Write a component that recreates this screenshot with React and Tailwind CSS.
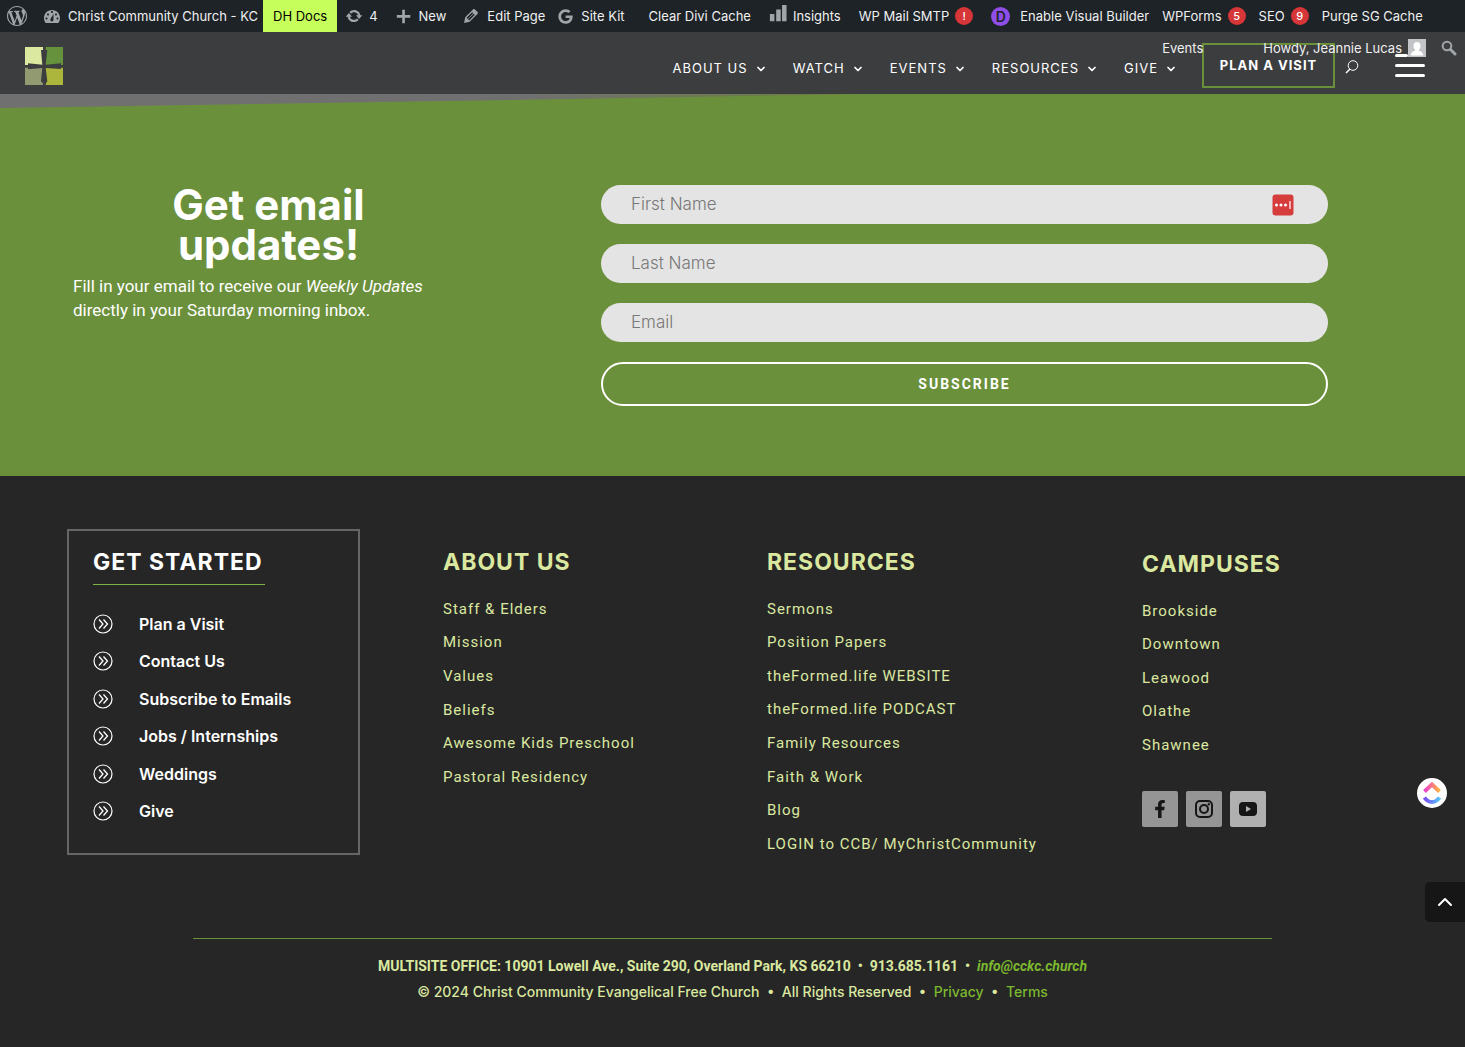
import React from 'react';
import { ChevronDown, ChevronUp } from 'lucide-react';
import { FaFacebookF, FaGoogle } from 'react-icons/fa';

const WP_ICONS = {
  wordpress:
    'M20 10c0-5.51-4.49-10-10-10C4.48 0 0 4.49 0 10c0 5.52 4.48 10 10 10 5.51 0 10-4.48 10-10zM7.78 15.37L4.37 6.22c.55-.02 1.17-.08 1.17-.08.5-.06.44-1.13-.06-1.11 0 0-1.45.11-2.37.11-.18 0-.37 0-.58-.01C4.12 2.69 6.87 1.11 10 1.11c2.33 0 4.45.87 6.05 2.34-.68-.11-1.65.39-1.65 1.58 0 .74.45 1.36.9 2.1.35.61.55 1.36.55 2.46 0 1.49-1.4 5-1.4 5l-3.03-8.37c.54-.02.82-.17.82-.17.5-.05.44-1.25-.06-1.22 0 0-1.44.12-2.38.12-.87 0-2.33-.12-2.33-.12-.5-.03-.56 1.2-.06 1.22l.92.08 1.26 3.41zM17.41 10c.24-.64.74-1.87.43-4.25.7 1.29 1.05 2.71 1.05 4.25 0 3.29-1.73 6.24-4.4 7.78.97-2.59 1.94-5.2 2.92-7.78zM6.1 18.09C3.12 16.65 1.11 13.53 1.11 10c0-1.3.23-2.48.72-3.59C3.25 10.3 4.67 14.2 6.1 18.09zm4.03-6.63l2.58 6.98c-.86.29-1.76.45-2.71.45-.79 0-1.57-.11-2.29-.33.81-2.38 1.62-4.74 2.42-7.1z',
  dashboard:
    'M3.76 17h12.48C17.34 15.63 18 13.9 18 12c0-4.41-3.58-8-8-8s-8 3.59-8 8c0 1.9.66 3.63 1.76 5zM9 6c0-.55.45-1 1-1s1 .45 1 1-.45 1-1 1-1-.45-1-1zM5 8.500c0-.55.45-1 1-1s1 .45 1 1-.45 1-1 1-1-.45-1-1zM13 8.500c0-.55.45-1 1-1s1 .45 1 1-.45 1-1 1-1-.45-1-1zM3.500 12.500c0-.55.45-1 1-1s1 .45 1 1-.45 1-1 1-1-.45-1-1zM14.500 12.500c0-.55.45-1 1-1s1 .45 1 1-.45 1-1 1-1-.45-1-1zM11.600 8l-.2 5.800c0 .9-.6 1.600-1.500 1.600s-1.600-.8-1.500-1.700c.2-1.200 3.200-5.700 3.200-5.700z',
  update:
    'M10.2 3.28c3.53 0 6.43 2.61 6.92 6h2.08l-3.5 4-3.5-4h2.32c-.45-1.97-2.21-3.45-4.32-3.45-1.45 0-2.73.71-3.54 1.78L4.95 5.66C6.23 4.2 8.11 3.28 10.2 3.28zm-.4 13.44c-3.52 0-6.43-2.61-6.92-6H.8l3.5-4c1.17 1.33 2.33 2.67 3.5 4H5.48c.45 1.97 2.21 3.45 4.32 3.45 1.45 0 2.73-.71 3.54-1.78l1.71 1.95c-1.28 1.46-3.15 2.38-5.25 2.38z',
  plus: 'M17 9v3h-6v6H8v-6H2V9h6V3h3v6z',
  edit: 'M13.89 3.39l2.71 2.72c.46.46.42 1.24.03 1.64l-8.01 8.02-5.56 1.16 1.16-5.58s7.6-7.63 7.99-8.03c.39-.39 1.22-.39 1.68.07zm-2.73 2.79l-5.59 5.61 1.11 1.11 5.54-5.65zm-2.97 8.23l5.58-5.6-1.07-1.08-5.59 5.6z',
  insights: 'M1 10h5v8H1zM8 5h5v13H8zM14.500 0h5v18h-5z',
};

function WpIcon({ name, className = 'size-5' }) {
  return (
    <svg viewBox="0 0 20 20" className={`${className} shrink-0 fill-[#a0a5aa]`} aria-hidden="true">
      <path fillRule="evenodd" d={WP_ICONS[name]} />
    </svg>
  );
}

function AdminItem({ icon, label, badge, className = '' }) {
  return (
    <li className={`h-8 shrink-0 ${className}`}>
      <a href="#" className="flex h-full items-center gap-[6px]">
        {icon}
        {label && <span className="pt-0.5">{label}</span>}
        {badge && (
          <span className="flex size-[18px] items-center justify-center rounded-full bg-[#d63638] text-[11px] font-medium text-white">
            {badge}
          </span>
        )}
      </a>
    </li>
  );
}

function AdminBar() {
  return (
    <div className="relative z-20 h-8 bg-[#1d2327] font-['Inter',sans-serif] text-[13px] text-[#f0f0f1]">
      <ul className="flex pl-[7px] whitespace-nowrap">
        <AdminItem icon={<WpIcon name="wordpress" />} />
        <AdminItem className="ml-[15px]" icon={<WpIcon name="dashboard" />} label="Christ Community Church - KC" />
        <AdminItem className="ml-[5px] bg-[#c6ff5c] px-[10px] text-black" label="DH Docs" />
        <AdminItem className="ml-2" icon={<WpIcon name="update" className="size-[18px]" />} label="4" />
        <AdminItem className="ml-[17px]" icon={<WpIcon name="plus" className="size-[18px]" />} label="New" />
        <AdminItem className="ml-[15px]" icon={<WpIcon name="edit" />} label="Edit Page" />
        <AdminItem className="ml-[13px]" icon={<FaGoogle className="mr-0.5 size-[15px] text-[#a0a5aa]" />} label="Site Kit" />
        <AdminItem className="ml-6" label="Clear Divi Cache" />
        <AdminItem className="ml-[18px]" icon={<WpIcon name="insights" className="mb-1 size-[18px]" />} label="Insights" />
        <AdminItem className="ml-[18px]" label="WP Mail SMTP" badge="!" />
        <AdminItem
          className="ml-[18px]"
          icon={
            <span className="mr-1 flex size-[19px] items-center justify-center rounded-full bg-[#8f4ee8] text-[14px] font-semibold text-[#1d2327]">
              D
            </span>
          }
          label="Enable Visual Builder"
        />
        <AdminItem className="ml-[13px]" label="WPForms" badge="5" />
        <AdminItem className="ml-[13px]" label="SEO" badge="9" />
        <AdminItem className="ml-[13px]" label="Purge SG Cache" />
      </ul>
      {/* items that wrap onto a second line, over the site header */}
      <ul className="absolute top-8 right-2 flex whitespace-nowrap">
        <AdminItem label="Events" />
        <li className="ml-[60px] h-8">
          <a href="#" className="flex h-full items-center gap-[6px]">
            <span className="pt-0.5">Howdy, Jeannie Lucas</span>
            <svg viewBox="0 0 18 18" className="size-[18px]" aria-hidden="true">
              <rect width="18" height="18" fill="#c3c4c7" />
              <path d="M9 3c2.200 0 3.500 1.600 3.500 3.900 0 1.700-.7 2.900-1.500 3.700v1.200c1.800.5 4 1.500 4.300 4.700H2.700c.3-3.200 2.500-4.200 4.300-4.700v-1.200c-.8-.8-1.500-2-1.500-3.700C5.500 4.600 6.800 3 9 3z" fill="#fff" />
            </svg>
          </a>
        </li>
        <li className="ml-[15px] h-8">
          <button type="button" aria-label="Search site" className="flex h-full items-center">
            <svg viewBox="0 0 16 16" className="size-4" fill="none" stroke="#a0a5aa" aria-hidden="true">
              <circle cx="6" cy="6" r="4.300" strokeWidth="2" />
              <path d="M9.500 9.500l4.500 4.500" strokeWidth="3" strokeLinecap="round" />
            </svg>
          </button>
        </li>
      </ul>
    </div>
  );
}

function Logo() {
  return (
    <svg viewBox="0 0 38 38" className="size-[38px]" aria-hidden="true">
      <path d="M0 0h18v18H0z" fill="#dbe8a0" />
      <path d="M20.500 0H38v18H20z" fill="#67923d" />
      <path d="M0 20.500h18V38H0z" fill="#929a72" />
      <path d="M20 20.500h18V38H20.500z" fill="#acb53c" />
      <path
        d="M16 3h6.300l-1.600 14.700L36 16.300V22l-15.300-1.100L22.300 34 21 36.500h-3L16 34l1.300-13L3 22.300v-6l14.300 1.400zM0 18h38v2.500H0zM18 0h2.500v38H18z"
        fill="#3c3d3f"
      />
    </svg>
  );
}

const NAV = ['ABOUT US', 'WATCH', 'EVENTS', 'RESOURCES', 'GIVE'];

function SiteHeader() {
  return (
    <header className="flex h-[62px] items-center bg-[#3c3d3f] pr-10 pl-[25px] font-['Inter',sans-serif] text-[13px] text-white">
      <a href="#" aria-label="Home" className="pt-1.5">
        <Logo />
      </a>
      <nav className="ml-auto flex gap-[26px] pt-3 tracking-[1px]">
        {NAV.map((item) => (
          <a key={item} href="#" className="flex items-center gap-[7px]">
            {item}
            <ChevronDown size={12} strokeWidth={3.5} />
          </a>
        ))}
      </nav>
      <a
        href="#"
        className="mt-1 ml-[25px] flex h-[45px] w-[133px] items-center justify-center border-2 border-[#6b903c] pt-0.5 font-bold tracking-[1px]"
      >
        PLAN A VISIT
      </a>
      <button type="button" aria-label="Search" className="mt-2 ml-2.5">
        <svg viewBox="0 0 14 14" className="size-3.5" fill="none" stroke="#fff" aria-hidden="true">
          <circle cx="8" cy="5.500" r="4.800" />
          <path d="M5 9L1 13" strokeWidth="1.500" />
        </svg>
      </button>
      <button type="button" aria-label="Menu" className="mt-1 ml-9 flex w-[30px] flex-col gap-[7px]">
        <span className="h-[3px] w-[13px] rounded-full bg-white" />
        <span className="h-[3px] rounded-full bg-white" />
        <span className="h-[3px] rounded-full bg-white" />
      </button>
    </header>
  );
}

const FIELDS = [
  { id: 'first-name', label: 'First Name', type: 'text' },
  { id: 'last-name', label: 'Last Name', type: 'text' },
  { id: 'email', label: 'Email', type: 'email' },
];

function Signup() {
  return (
    <section className="relative grid grid-cols-[391fr_727fr] gap-[137px] bg-[#6b903c] pt-[91px] pr-[137px] pb-[70px] pl-[73px] text-white">
      <svg viewBox="0 0 100 14" preserveAspectRatio="none" className="absolute top-0 left-0 h-3.5 w-3/5" aria-hidden="true">
        <defs>
          <linearGradient id="wedge">
            <stop offset="0.6" stopColor="#707070" />
            <stop offset="1" stopColor="#6b803c" />
          </linearGradient>
        </defs>
        <path d="M0 0H100L0 14z" fill="url(#wedge)" />
      </svg>
      <div>
        <h2 className="px-20 pb-[9px] text-center font-['Inter',sans-serif] text-[42px] leading-10 font-bold">
          Get email updates!
        </h2>
        <p className="font-['Roboto',sans-serif] text-[17px] leading-6">
          Fill in your email to receive our <em>Weekly Updates</em> directly in your Saturday morning inbox.
        </p>
      </div>
      <form className="flex flex-col gap-5 font-['Inter',sans-serif]">
        {FIELDS.map((field) => (
          <div key={field.id} className="relative">
            <input
              id={field.id}
              type={field.type}
              aria-label={field.label}
              placeholder={field.label}
              className="block h-[39px] w-full rounded-full bg-[#e4e4e4] px-[30px] pb-0.5 text-[17px] font-light text-[#666] placeholder:text-[#777]"
            />
            {field.id === 'first-name' && (
              <svg viewBox="0 0 22 22" className="absolute top-[9px] right-[34px] size-[22px]" aria-hidden="true">
                <rect x="0.500" y="0.500" width="21" height="21" rx="3" fill="#d63c3c" />
                <circle cx="4.500" cy="11" r="1.500" fill="#fff" />
                <circle cx="9" cy="11" r="1.500" fill="#fff" />
                <circle cx="13.500" cy="11" r="1.500" fill="#fff" />
                <path d="M18 7v8" stroke="#fff" strokeWidth="1.200" />
              </svg>
            )}
          </div>
        ))}
        <button
          type="submit"
          className="h-11 rounded-full border-2 border-white font-['Roboto',sans-serif] text-[14px] font-bold tracking-[2px]"
        >
          SUBSCRIBE
        </button>
      </form>
    </section>
  );
}

const GET_STARTED = ['Plan a Visit', 'Contact Us', 'Subscribe to Emails', 'Jobs / Internships', 'Weddings', 'Give'];
const ABOUT = ['Staff & Elders', 'Mission', 'Values', 'Beliefs', 'Awesome Kids Preschool', 'Pastoral Residency'];
const RESOURCES = [
  'Sermons',
  'Position Papers',
  'theFormed.life WEBSITE',
  'theFormed.life PODCAST',
  'Family Resources',
  'Faith & Work',
  'Blog',
  'LOGIN to CCB/ MyChristCommunity',
];
const CAMPUSES = ['Brookside', 'Downtown', 'Leawood', 'Olathe', 'Shawnee'];

function LinkColumn({ title, links, listClass, className = '', children }) {
  return (
    <div className={`text-[#dbe8a0] ${className}`}>
      <h3 className="font-['Inter',sans-serif] text-[23px] leading-6 font-bold tracking-[1px]">{title}</h3>
      <ul className={`mt-[18px] grid auto-rows-fr items-center font-['Roboto',sans-serif] text-[15px] tracking-[1px] ${listClass}`}>
        {links.map((link) => (
          <li key={link}>
            <a href="#">{link}</a>
          </li>
        ))}
      </ul>
      {children}
    </div>
  );
}

function SocialLinks() {
  return (
    <div className="mt-[29px] flex gap-2 text-[#161616]">
      <a href="#" aria-label="Facebook" className="flex size-9 items-center justify-center rounded-xs bg-[#959595]">
        <FaFacebookF size={18} />
      </a>
      <a href="#" aria-label="Instagram" className="flex size-9 items-center justify-center rounded-xs bg-[#959595]">
        <svg viewBox="0 0 18 18" className="size-[18px]" fill="none" stroke="currentColor" strokeWidth="2" aria-hidden="true">
          <rect x="1" y="1" width="16" height="16" rx="4" />
          <circle cx="9" cy="9" r="4" />
          <circle cx="13.800" cy="4.200" r="1.200" fill="currentColor" stroke="none" />
        </svg>
      </a>
      <a href="#" aria-label="YouTube" className="flex size-9 items-center justify-center rounded-xs bg-[#b0b0b0]">
        <svg viewBox="0 0 18 14" className="h-3.5 w-[18px]" aria-hidden="true">
          <rect width="18" height="14" rx="4" fill="currentColor" />
          <path d="M7 4l5 3-5 3z" fill="#b0b0b0" />
        </svg>
      </a>
    </div>
  );
}

function Footer() {
  return (
    <footer className="bg-[#262626] pt-[53px] pb-[42px]">
      <div className="grid grid-cols-[376fr_324fr_375fr_323fr] pl-[67px]">
        <div className="mr-[83px] h-[326px] border-2 border-[#666] px-6 pt-[18px] font-['Inter',sans-serif] text-white">
          <h3 className="inline-block border-b border-[#7cb342] pr-0.5 pb-2 text-[23px] leading-[27px] font-bold tracking-[1px]">
            GET STARTED
          </h3>
          <ul className="mt-5 grid h-[225px] auto-rows-fr items-center text-[16px] font-semibold">
            {GET_STARTED.map((item) => (
              <li key={item}>
                <a href="#" className="flex items-center gap-[26px]">
                  <svg viewBox="0 0 20 20" className="size-5" fill="none" stroke="#fff" aria-hidden="true">
                    <circle cx="10" cy="10" r="9" strokeWidth="1.200" />
                    <path d="M6 5.500l4 4.500-4 4.500M10.500 5.500l4 4.500-4 4.500" strokeWidth="1.300" />
                  </svg>
                  {item}
                </a>
              </li>
            ))}
          </ul>
        </div>
        <LinkColumn title="ABOUT US" links={ABOUT} listClass="h-[202px]" className="pt-[21px]" />
        <LinkColumn title="RESOURCES" links={RESOURCES} listClass="h-[269px]" className="pt-[21px]" />
        <LinkColumn title="CAMPUSES" links={CAMPUSES} listClass="h-[168px]" className="pt-[23px]">
          <SocialLinks />
        </LinkColumn>
      </div>
      <div className="mx-[193px] mt-[77px] border-t border-[#6b903c] pt-3.5 text-center whitespace-pre text-[#dbe8a0]">
        <p className="font-['Roboto',sans-serif] text-[14px] leading-[26px] font-bold">
          MULTISITE OFFICE: 10901 Lowell Ave., Suite 290, Overland Park, KS 66210{'  •  '}913.685.1161{'  •  '}
          <a href="#" className="text-[#7cb82f] italic">
            info@cckc.church
          </a>
        </p>
        <p className="font-['Inter',sans-serif] text-[14px] leading-[26px] font-medium">
          © 2024 Christ Community Evangelical Free Church{'  •  '}All Rights Reserved{'  •  '}
          <a href="#" className="text-[#7cb82f]">
            Privacy
          </a>
          {'  •  '}
          <a href="#" className="text-[#7cb82f]">
            Terms
          </a>
        </p>
      </div>
    </footer>
  );
}

function FloatingButtons() {
  return (
    <>
      <button
        type="button"
        aria-label="ClickUp"
        className="fixed top-[778px] right-[18px] flex size-[30px] items-center justify-center rounded-full bg-white"
      >
        <svg viewBox="0 0 30 30" className="size-[30px]" fill="none" strokeWidth="4" aria-hidden="true">
          <defs>
            <linearGradient id="cu-top">
              <stop stopColor="#ee3fd0" />
              <stop offset="1" stopColor="#fcb43c" />
            </linearGradient>
            <linearGradient id="cu-bottom">
              <stop stopColor="#7a4df5" />
              <stop offset="1" stopColor="#56c4fb" />
            </linearGradient>
          </defs>
          <path d="M7.500 13.500L15 6.500l7.500 7" stroke="url(#cu-top)" />
          <path d="M7.500 19.500c4 6 11 6 15 0" stroke="url(#cu-bottom)" />
        </svg>
      </button>
      <button
        type="button"
        aria-label="Back to top"
        className="fixed top-[882px] right-0 flex size-10 items-center justify-center rounded-l-[5px] bg-[#161616] text-white"
      >
        <ChevronUp size={24} />
      </button>
    </>
  );
}

export default function App() {
  return (
    <div className="min-h-screen bg-[#262626]">
      <AdminBar />
      <SiteHeader />
      <Signup />
      <Footer />
      <FloatingButtons />
    </div>
  );
}
